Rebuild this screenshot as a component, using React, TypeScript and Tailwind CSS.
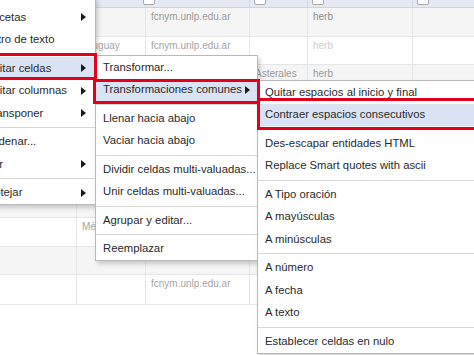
import React from 'react';

const cols = ['w-[77px]', 'w-[69px]', 'w-[104px]', 'w-[58px]', 'w-[105px]', 'w-[80px]'];

type Cell = { t: string; c: string } | null;
type Row = { cls: string; cells: Cell[] };

const rows: Row[] = [
  { cls: 'h-[29px] bg-[#f5f5f5]', cells: [null, null, { t: 'fcnym.unlp.edu.ar', c: 'text-[#9a9a9a]' }, null, { t: 'herb', c: 'text-[#8e8e8e]' }, null] },
  { cls: 'h-[28px] bg-white', cells: [null, { t: 'Uruguay', c: 'text-[#a5a5a5]' }, { t: 'fcnym.unlp.edu.ar', c: 'text-[#a5a5a5]' }, null, { t: 'herb', c: 'text-[#cccccc]' }, null] },
  { cls: 'h-[28px] bg-[#f5f5f5]', cells: [null, null, null, { t: 'Asterales', c: 'text-[#9a9a9a]' }, { t: 'herb', c: 'text-[#9a9a9a]' }, null] },
  { cls: 'h-[29px] bg-white', cells: [null, null, null, null, null, null] },
  { cls: 'h-[28px] bg-[#f5f5f5]', cells: [null, null, null, null, null, null] },
  { cls: 'h-[29px] bg-white', cells: [null, null, null, null, null, null] },
  { cls: 'h-[39px] bg-[#f5f5f5]', cells: [null, null, null, null, null, null] },
  { cls: 'h-[29px] bg-white', cells: [null, { t: 'México', c: 'text-[#a5a5a5] pl-[3px]' }, null, null, null, null] },
  { cls: 'h-[28px] bg-[#f5f5f5]', cells: [null, null, null, null, null, null] },
  { cls: 'h-[30px] bg-white', cells: [null, null, { t: 'fcnym.unlp.edu.ar', c: 'text-[#a5a5a5]' }, null, null, null] },
];

function Tri() {
  return <span className="block h-0 w-0 border-y-[4px] border-l-[5px] border-y-transparent border-l-[#1a1a1a]" />;
}

function Item({ label, arrow, hl, ar }: { label: string; arrow?: boolean; hl?: boolean; ar?: string }) {
  return (
    <div className={`relative flex h-[22.5px] items-center whitespace-nowrap pl-[7px] ${hl ? 'bg-[#d9e3f3]' : ''}`}>
      <span>{label}</span>
      {arrow && (
        <span className={`absolute top-1/2 -translate-y-1/2 ${ar ?? 'right-[9px]'}`}>
          <Tri />
        </span>
      )}
    </div>
  );
}

function Sep() {
  return (
    <div className="flex h-[6px] items-center">
      <div className="h-px w-full bg-[#d6d6d6]" />
    </div>
  );
}

const menuCls =
  "absolute border border-[#b9b9b9] bg-white text-[11.3px] text-[#2a2a2a] shadow-[2px_3px_4px_rgba(0,0,0,0.18)] font-['Liberation_Sans',Arial,sans-serif]";

export default function App() {
  return (
    <div className="relative h-[355px] w-[474px] overflow-hidden bg-white font-['Liberation_Sans',Arial,sans-serif]">
      {/* table */}
      <div className="flex flex-col">
        <div className="flex h-[8px] border-b border-[#cbd3e4] bg-[#e4e9f4]">
          {cols.map((w, i) => (
            <div key={i} className={`${w} shrink-0 border-r border-[#d3d9e6]`}>
              <div className={`-mt-[7px] h-[12px] w-[12px] rounded-[2px] border border-[#a9a9a9] bg-white ${i === 2 ? 'ml-[-3px]' : 'ml-[4px]'}`} />
            </div>
          ))}
        </div>
        {rows.map((r, ri) => (
          <div key={ri} className={`flex border-b border-[#e6e6e6] ${r.cls}`}>
            {cols.map((w, ci) => {
              const cell = r.cells[ci];
              return (
                <div key={ci} className={`${w} shrink-0 overflow-hidden whitespace-nowrap border-r border-[#e6e6e6] pt-[2px] text-[10px] leading-[14px]`}>
                  {cell && <div className={`pl-[5px] ${cell.c}`}>{cell.t}</div>}
                </div>
              );
            })}
          </div>
        ))}
      </div>

      {/* menu 1 */}
      <div className={`${menuCls} left-[-22px] top-[-3px] w-[118px] pt-[8px]`}>
        <Item label="Facetas" arrow />
        <Item label="Filtro de texto" />
        <Sep />
        <Item label="Editar celdas" arrow hl />
        <Item label="Editar columnas" arrow />
        <Item label="Transponer" arrow />
        <Sep />
        <Item label="Ordenar..." />
        <Item label="Ver" arrow />
        <Sep />
        <Item label="Cotejar" arrow />
      </div>

      {/* menu 2 */}
      <div className={`${menuCls} left-[95px] top-[55px] w-[163px]`}>
        <Item label="Transformar..." />
        <Item label="Transformaciones comunes" arrow hl ar="right-[7px]" />
        <Sep />
        <Item label="Llenar hacia abajo" />
        <Item label="Vaciar hacia abajo" />
        <Sep />
        <Item label="Dividir celdas multi-valuadas..." />
        <Item label="Unir celdas multi-valuadas..." />
        <Sep />
        <Item label="Agrupar y editar..." />
        <Sep />
        <Item label="Reemplazar" />
      </div>

      {/* menu 3 */}
      <div className={`${menuCls} left-[257px] top-[80px] w-[240px]`}>
        <Item label="Quitar espacios al inicio y final" />
        <Item label="Contraer espacios consecutivos" hl />
        <Sep />
        <Item label="Des-escapar entidades HTML" />
        <Item label="Replace Smart quotes with ascii" />
        <Sep />
        <Item label="A Tipo oración" />
        <Item label="A mayúsculas" />
        <Item label="A minúsculas" />
        <Sep />
        <Item label="A número" />
        <Item label="A fecha" />
        <Item label="A texto" />
        <Sep />
        <Item label="Establecer celdas en nulo" />
      </div>

      {/* red highlight boxes */}
      <div className="absolute left-[-6px] top-[53px] h-[27px] w-[103px] border-[3.5px] border-[#e2001a]" />
      <div className="absolute left-[93px] top-[79px] h-[25px] w-[167px] border-[3.5px] border-[#e2001a]" />
      <div className="absolute left-[257px] top-[98px] h-[32px] w-[240px] border-[3.5px] border-[#e2001a]" />
    </div>
  );
}
